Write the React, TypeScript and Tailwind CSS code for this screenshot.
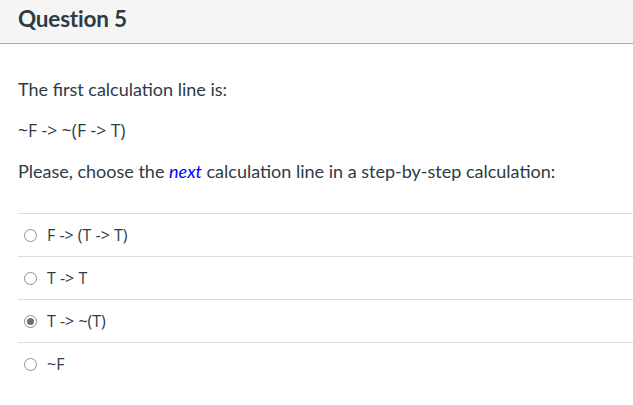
import React from "react";

const answers = [
  { text: "F -> (T -> T)", checked: false },
  { text: "T -> T", checked: false },
  { text: "T -> ~(T)", checked: true },
  { text: "~F", checked: false },
];

function Radio({ checked }: { checked: boolean }) {
  return (
    <span
      className={
        "flex h-[13px] w-[13px] shrink-0 items-center justify-center rounded-full border bg-white " +
        (checked ? "border-[#8a8a8a]" : "border-[#8f8f8f]")
      }
    >
      {checked && <span className="h-[7px] w-[7px] rounded-full bg-[#6e6e6e]" />}
    </span>
  );
}

export default function App() {
  return (
    <div className="min-h-[405px] w-[633px] bg-white text-[#2d3b45]" style={{ fontFamily: "Lato, 'Noto Sans', sans-serif" }}>
      <div className="h-[44px] border-b border-[#acacac] bg-[#f5f5f5] px-[18px] pt-[7px]">
        <h2 className="text-[22.5px] font-bold leading-[24px] tracking-[-0.2px] text-[#2d3b45]">Question 5</h2>
      </div>
      <div className="pl-[18px]">
        <p className="mt-[32px] text-[18px] leading-[26px]">The first calculation line is:</p>
        <p className="mt-[15px] text-[17.5px] leading-[26px]" style={{ fontFamily: "'Open Sans', 'Noto Sans', sans-serif" }}>
          ~F -&gt; ~(F -&gt; T)
        </p>
        <p className="mt-[15px] text-[18px] leading-[26px]">
          Please, choose the <em className="text-[#0000ff]">next</em> calculation line in a step-by-step calculation:
        </p>
        <div className="mt-[29px]">
          {answers.map((a) => (
            <div key={a.text} className="flex h-[43px] items-center gap-[10px] border-t border-[#dcdcdc] pl-[6px]">
              <Radio checked={a.checked} />
              <span className="text-[16px] leading-none" style={{ fontFamily: "'Open Sans', 'Noto Sans', sans-serif" }}>
                {a.text}
              </span>
            </div>
          ))}
        </div>
      </div>
    </div>
  );
}
